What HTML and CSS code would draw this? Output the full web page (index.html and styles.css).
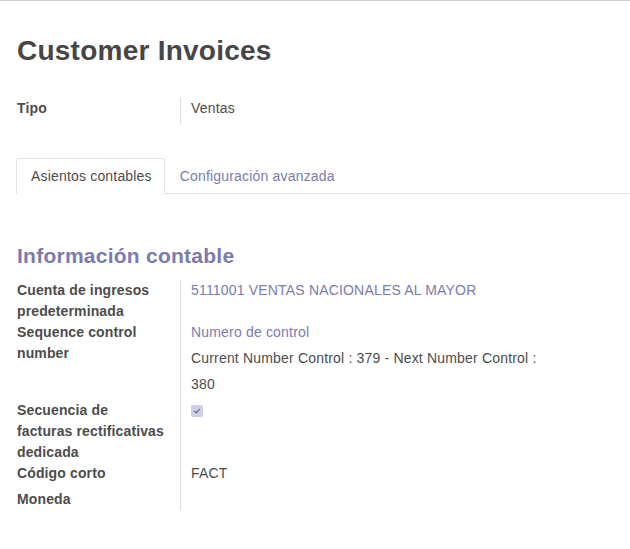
FILE: index.html
```html
<!DOCTYPE html>
<html lang="es">
<head>
<meta charset="utf-8">
<title>Customer Invoices</title>
<link rel="stylesheet" href="styles.css">
</head>
<body>
<div class="sheet">
  <h1 class="title">Customer Invoices</h1>

  <div class="group group-top">
    <div class="label label-pad">Tipo</div>
    <div class="value label-pad">Ventas</div>
  </div>

  <ul class="tabs">
    <li class="tab active">Asientos contables</li>
    <li class="tab">Configuración avanzada</li>
  </ul>

  <h2 class="separator">Información contable</h2>

  <div class="group">
    <div class="label">Cuenta de ingresos predeterminada</div>
    <div class="value"><span class="link">5111001 VENTAS NACIONALES AL MAYOR</span></div>

    <div class="label">Sequence control number</div>
    <div class="value">
      <div class="link">Numero de control</div>
      <div class="info">Current Number Control : 379 - Next Number Control : 380</div>
    </div>

    <div class="label">Secuencia de facturas rectificativas dedicada</div>
    <div class="value">
      <span class="checkbox">
        <svg width="12" height="12" viewBox="0 0 12 12"><rect x="0" y="0" width="12" height="12" rx="2" fill="#cfcfe6"/><path d="M3.6 6.2 L5.2 7.7 L8.4 4.4" fill="none" stroke="#6f6ea3" stroke-width="1.3" stroke-linecap="round" stroke-linejoin="round"/></svg>
      </span>
    </div>

    <div class="label label-pad">Código corto</div>
    <div class="value label-pad">FACT</div>

    <div class="label">Moneda</div>
    <div class="value"></div>
  </div>
</div>
</body>
</html>
```

FILE: styles.css
```css
html, body {
  margin: 0;
  padding: 0;
  background: #ffffff;
}

body {
  border-top: 1px solid #d2d2d2;
  font-family: "Liberation Sans", Arial, sans-serif;
  font-size: 14px;
  line-height: 21px;
  color: #4c4c4c;
  letter-spacing: 0.18px;
}

.sheet {
  padding-left: 16px;
}

.title {
  margin: 33px 0 0 0;
  padding-left: 1px;
  font-size: 28px;
  line-height: 34px;
  font-weight: bold;
  color: #464646;
  letter-spacing: 0.24px;
}

.group {
  display: grid;
  grid-template-columns: 165px 370px;
  margin-top: 12px;
}

.group-top {
  margin-top: 30px;
}

.label {
  font-weight: bold;
  border-right: 1px solid #dcdcdc;
  padding-left: 1px;
  padding-right: 15px;
  letter-spacing: 0.13px;
}

.label-pad {
  padding-bottom: 5px;
}

.value {
  padding-left: 10px;
}

.link {
  color: #7c7bad;
}

.info {
  line-height: 26px;
  margin-top: 2px;
  padding-bottom: 3px;
}

.checkbox {
  display: block;
  width: 12px;
  height: 12px;
  margin-top: 5px;
}

.checkbox svg {
  display: block;
}

.tabs {
  list-style: none;
  margin: 34px 0 0 0;
  padding: 0;
  display: flex;
  border-bottom: 1px solid #dee2e6;
}

.tab {
  padding: 6px 14px 6px 14px;
  line-height: 22px;
  border: 1px solid transparent;
  border-top-left-radius: 3px;
  border-top-right-radius: 3px;
  margin-bottom: -1px;
  color: #7c7bad;
}

.tab.active {
  color: #4c4c4c;
  background: #ffffff;
  border-color: #dee2e6 #dee2e6 #ffffff;
  padding-right: 12px;
}

.separator {
  margin: 49px 0 0 0;
  padding-left: 1px;
  font-size: 21px;
  line-height: 25px;
  font-weight: bold;
  color: #7c7bad;
  letter-spacing: 0.25px;
}
```
